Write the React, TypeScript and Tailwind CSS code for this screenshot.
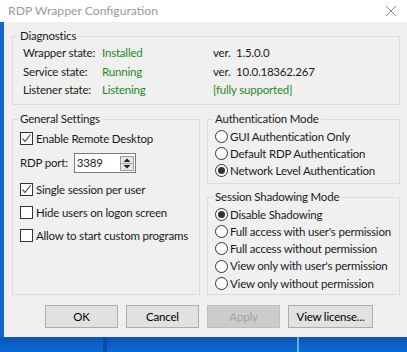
import React from "react";

const GREEN = "text-[#1d8a1d]";

function CheckBox({ checked, label }: { checked?: boolean; label: string }) {
  return (
    <div className="flex h-[23px] items-center gap-[3px]">
      <span className="flex h-[13px] w-[13px] shrink-0 items-center justify-center border border-[#333333] bg-white">
        {checked && (
          <svg width="11" height="11" viewBox="0 0 11 11">
            <polyline
              points="1.5,5.5 4,8.5 9.5,1.5"
              fill="none"
              stroke="#333333"
              strokeWidth="1.1"
            />
          </svg>
        )}
      </span>
      <span>{label}</span>
    </div>
  );
}

function Radio({ checked, label }: { checked?: boolean; label: string }) {
  return (
    <div className="flex h-[17.3px] items-center gap-[2px]">
      <span className="flex h-[13px] w-[13px] shrink-0 items-center justify-center rounded-full border border-[#333333] bg-white">
        {checked && <span className="h-[7px] w-[7px] rounded-full bg-[#333333]" />}
      </span>
      <span>{label}</span>
    </div>
  );
}

function Group({
  title,
  className,
  children,
}: {
  title: string;
  className?: string;
  children: React.ReactNode;
}) {
  return (
    <fieldset className={"border border-[#dcdcdc] " + (className ?? "")}>
      <legend className="ml-[5px] px-[2px] leading-[16px]">{title}</legend>
      {children}
    </fieldset>
  );
}

function Button({ label, width, disabled }: { label: string; width: string; disabled?: boolean }) {
  return (
    <button
      className={
        "flex h-[23px] items-center justify-center border " +
        width +
        (disabled
          ? " border-[#bfbfbf] bg-[#cccccc] text-[#a3a3a3]"
          : " border-[#adadad] bg-[#e1e1e1] text-black")
      }
    >
      {label}
    </button>
  );
}

export default function App() {
  return (
    <div className="h-[352px] w-[407px] overflow-hidden whitespace-nowrap bg-[#0a5fc8] font-['Lato',sans-serif] text-[11.5px] tracking-[-0.2px] text-[#1a1a1a]">
      {/* title bar */}
      <div className="flex h-[22px] items-center justify-between bg-white pl-[8px] pr-[10px]">
        <span className="text-[12.2px] tracking-normal text-[#9a9a9a]">RDP Wrapper Configuration</span>
        <svg width="12" height="12" viewBox="0 0 12 12">
          <path d="M1 1 L11 11 M11 1 L1 11" stroke="#8a8a8a" strokeWidth="1" />
        </svg>
      </div>

      <div className="flex h-[315px]">
        <div className="w-[4px] bg-[#1467cc]" />
        <div className="flex-1 bg-[#f0f0f0] pl-[8px] pr-[7px] pt-[6px]">
          <Group title="Diagnostics" className="h-[77px]">
            <div className="grid grid-cols-[79px_111px_1fr] pl-[10px] leading-[18.5px]">
              <span>Wrapper state:</span>
              <span className={GREEN}>Installed</span>
              <span>ver.&nbsp; 1.5.0.0</span>
              <span>Service state:</span>
              <span className={GREEN}>Running</span>
              <span>ver.&nbsp; 10.0.18362.267</span>
              <span>Listener state:</span>
              <span className={GREEN}>Listening</span>
              <span className={GREEN}>[fully supported]</span>
            </div>
          </Group>

          <div className="mt-[6px] flex gap-[7px]">
            <Group title="General Settings" className="h-[184px] w-[188px] shrink-0">
              <div className="flex flex-col pl-[7px]">
                <CheckBox checked label="Enable Remote Desktop" />
                <div className="flex h-[26px] items-center gap-[6px]">
                  <span>RDP port:</span>
                  <div className="flex h-[20px] w-[62px] items-center justify-between border border-[#7a7a7a] bg-white pl-[2px] pr-[1px]">
                    <span>3389</span>
                    <svg width="14" height="15" viewBox="0 0 14 15">
                      <rect x="0.5" y="0.5" width="13" height="14" fill="#e6e6e6" stroke="#a0a0a0" />
                      <line x1="1" y1="7.5" x2="13" y2="7.5" stroke="#a0a0a0" />
                      <polygon points="3.5,6 10.5,6 7,2.5" fill="#222" />
                      <polygon points="3.5,9 10.5,9 7,12.5" fill="#222" />
                    </svg>
                  </div>
                </div>
                <div className="h-[2px]" />
                <CheckBox checked label="Single session per user" />
                <CheckBox label="Hide users on logon screen" />
                <CheckBox label="Allow to start custom programs" />
              </div>
            </Group>

            <div className="flex w-[193px] shrink-0 flex-col">
              <Group title="Authentication Mode" className="h-[73px]">
                <div className="flex flex-col pl-[7px] pt-[0.5px]">
                  <Radio label="GUI Authentication Only" />
                  <Radio label="Default RDP Authentication" />
                  <Radio checked label="Network Level Authentication" />
                </div>
              </Group>
              <Group title="Session Shadowing Mode" className="mt-[5px] h-[106px]">
                <div className="flex flex-col pl-[7px] pt-[0.5px]">
                  <Radio checked label="Disable Shadowing" />
                  <Radio label="Full access with user's permission" />
                  <Radio label="Full access without permission" />
                  <Radio label="View only with user's permission" />
                  <Radio label="View only without permission" />
                </div>
              </Group>
            </div>
          </div>

          <div className="mt-[10px] flex gap-[8px] pl-[33px]">
            <Button label="OK" width="w-[73px]" />
            <Button label="Cancel" width="w-[73px]" />
            <Button label="Apply" width="w-[73px]" disabled />
            <Button label="View license..." width="w-[85px]" />
          </div>
        </div>
      </div>

      {/* desktop below window */}
      <div className="flex h-[15px] bg-gradient-to-b from-[#0a55b8] to-[#0b6ad6]">
        <div className="w-[103px]" />
        <div className="w-[4px] bg-[#0a4aa8]" />
        <div className="w-[190px]" />
        <div className="w-[2px] bg-[#4fb4f0]" />
      </div>
    </div>
  );
}
